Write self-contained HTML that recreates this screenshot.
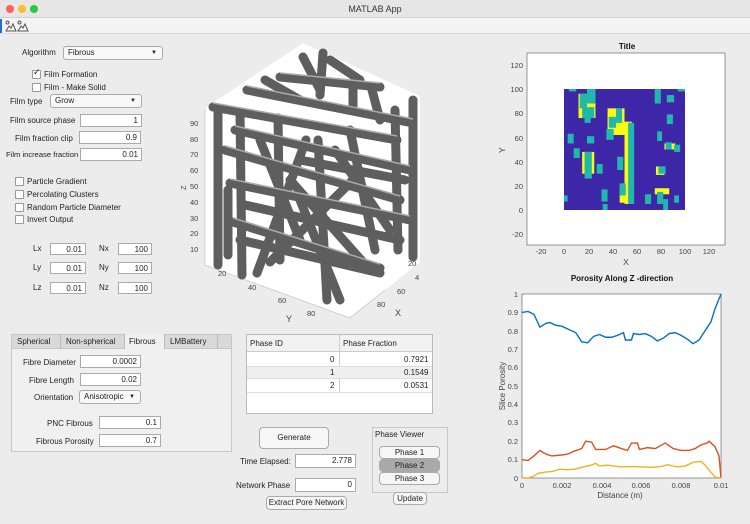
<!DOCTYPE html>
<html><head><meta charset="utf-8">
<style>
*{box-sizing:border-box;margin:0;padding:0}
body{width:750px;height:524px;overflow:hidden;background:#ececec;font-family:"Liberation Sans",sans-serif;font-size:8px;color:#222;position:relative}
.a{position:absolute;white-space:nowrap}
.in{position:absolute;background:#fff;border:1px solid #aaa;text-align:right;padding-right:3px;font-size:8px;line-height:11px}
.dd{position:absolute;background:#f8f8f8;border:1px solid #aaa;border-radius:3px;padding-left:4px;font-size:8px}
.dd:after{content:"▼";position:absolute;right:5px;font-size:6px}
.cb{position:absolute;width:9px;height:9px;border:1px solid #999;background:#fff;border-radius:1px}
.btn{position:absolute;background:#f6f6f6;border:1px solid #aaa;border-radius:4px;text-align:center;font-size:8px}
</style></head><body>
<div class="a" style="left:0;top:0;width:750px;height:18px;background:#e6e6e6;border-bottom:1px solid #d0d0d0"></div>
<div class="a" style="left:6px;top:5px;width:8px;height:8px;border-radius:50%;background:#fe5f57"></div>
<div class="a" style="left:18px;top:5px;width:8px;height:8px;border-radius:50%;background:#febc2e"></div>
<div class="a" style="left:30px;top:5px;width:8px;height:8px;border-radius:50%;background:#28c840"></div>
<div class="a" style="left:0;top:4px;width:750px;text-align:center;font-size:9px;color:#333">MATLAB App</div>
<div class="a" style="left:0;top:18px;width:750px;height:16px;background:#f4f4f4;border-bottom:1px solid #d8d8d8"></div>
<div class="a" style="left:0;top:19px;width:2px;height:14px;background:#1e6fd0"></div>
<svg class="a" style="left:5px;top:20px" width="30" height="12"><g fill="none" stroke="#555" stroke-width="1"><circle cx="2.5" cy="2.5" r="1.5"/><path d="M1 11 L4 6 L6 8 L8 4 L11 11 Z"/><circle cx="14.5" cy="2.5" r="1.5"/><path d="M13 11 L16 6 L18 8 L20 4 L23 11 Z"/></g></svg>

<div class="a" style="left:22px;top:48px">Algorithm</div>
<div class="dd" style="left:63px;top:46px;width:100px;height:14px;line-height:12px">Fibrous</div>
<div class="cb" style="left:32px;top:70px"></div><div class="a" style="left:33px;top:67px;font-size:9px">✓</div>
<div class="a" style="left:44px;top:70px">Film Formation</div>
<div class="cb" style="left:32px;top:83px"></div><div class="a" style="left:44px;top:83px">Film - Make Solid</div>
<div class="a" style="left:10px;top:97px">Film type</div>
<div class="dd" style="left:50px;top:94px;width:92px;height:14px;line-height:12px">Grow</div>
<div class="a" style="left:10px;top:116px">Film source phase</div>
<div class="in" style="left:80px;top:114px;width:62px;height:13px">1</div>
<div class="a" style="left:15px;top:134px">Film fraction clip</div>
<div class="in" style="left:79px;top:131px;width:62px;height:13px">0.9</div>
<div class="a" style="left:6px;top:150px;font-size:7.6px">Film increase fraction</div>
<div class="in" style="left:80px;top:148px;width:62px;height:13px">0.01</div>

<div class="cb" style="left:15px;top:177px"></div><div class="a" style="left:27px;top:177px">Particle Gradient</div>
<div class="cb" style="left:15px;top:190px"></div><div class="a" style="left:27px;top:190px">Percolating Clusters</div>
<div class="cb" style="left:15px;top:203px"></div><div class="a" style="left:27px;top:203px">Random Particle Diameter</div>
<div class="cb" style="left:15px;top:215px"></div><div class="a" style="left:27px;top:215px">Invert Output</div>

<div class="a" style="left:33px;top:244px">Lx</div><div class="in" style="left:50px;top:243px;width:36px;height:12px">0.01</div>
<div class="a" style="left:99px;top:244px">Nx</div><div class="in" style="left:118px;top:243px;width:34px;height:12px">100</div>
<div class="a" style="left:33px;top:263px">Ly</div><div class="in" style="left:50px;top:262px;width:36px;height:12px">0.01</div>
<div class="a" style="left:99px;top:263px">Ny</div><div class="in" style="left:118px;top:262px;width:34px;height:12px">100</div>
<div class="a" style="left:33px;top:283px">Lz</div><div class="in" style="left:50px;top:282px;width:36px;height:12px">0.01</div>
<div class="a" style="left:99px;top:283px">Nz</div><div class="in" style="left:118px;top:282px;width:34px;height:12px">100</div>

<div class="a" style="left:11px;top:334px;width:221px;height:118px;border:1px solid #c8c8c8;background:#f0f0f0"></div>
<div class="a" style="left:11px;top:334px;width:221px;height:15px;background:#d9d9d9;border:1px solid #c8c8c8"></div>
<div class="a" style="left:17px;top:337px">Spherical</div>
<div class="a" style="left:60px;top:334px;width:1px;height:15px;background:#bbb"></div>
<div class="a" style="left:66px;top:337px">Non-spherical</div>
<div class="a" style="left:124px;top:334px;width:41px;height:15px;background:#f0f0f0;border-left:1px solid #bbb;border-right:1px solid #bbb"></div>
<div class="a" style="left:129px;top:337px">Fibrous</div>
<div class="a" style="left:170px;top:337px">LMBattery</div>
<div class="a" style="left:217px;top:334px;width:1px;height:15px;background:#bbb"></div>
<div class="a" style="left:23px;top:358px">Fibre Diameter</div><div class="in" style="left:80px;top:355px;width:61px;height:13px">0.0002</div>
<div class="a" style="left:29px;top:376px">Fibre Length</div><div class="in" style="left:80px;top:373px;width:61px;height:13px">0.02</div>
<div class="a" style="left:34px;top:393px">Orientation</div>
<div class="dd" style="left:79px;top:390px;width:62px;height:14px;line-height:12px">Anisotropic</div>
<div class="a" style="left:47px;top:419px">PNC Fibrous</div><div class="in" style="left:99px;top:416px;width:62px;height:13px">0.1</div>
<div class="a" style="left:36px;top:437px">Fibrous Porosity</div><div class="in" style="left:99px;top:434px;width:62px;height:13px">0.7</div>

<div class="a" style="left:246px;top:334px;width:187px;height:80px;background:#fff;border:1px solid #bbb"></div>
<div class="a" style="left:247px;top:335px;width:185px;height:17px;background:#f2f2f2;border-bottom:1px solid #ccc"></div>
<div class="a" style="left:339px;top:335px;width:1px;height:57px;background:#ccc"></div>
<div class="a" style="left:250px;top:339px">Phase ID</div><div class="a" style="left:343px;top:339px">Phase Fraction</div>
<div class="a" style="left:247px;top:366px;width:185px;height:13px;background:#efefef;border-top:1px solid #ddd;border-bottom:1px solid #ddd"></div>
<div class="a" style="left:247px;top:392px;width:185px;height:1px;background:#ddd"></div>
<div class="a" style="left:330px;top:355px">0</div><div class="a" style="left:404px;top:355px">0.7921</div>
<div class="a" style="left:330px;top:368px">1</div><div class="a" style="left:404px;top:368px">0.1549</div>
<div class="a" style="left:330px;top:381px">2</div><div class="a" style="left:404px;top:381px">0.0531</div>

<div class="btn" style="left:259px;top:427px;width:70px;height:22px;line-height:20px">Generate</div>
<div class="a" style="left:240px;top:457px">Time Elapsed:</div><div class="in" style="left:295px;top:454px;width:61px;height:14px;line-height:12px">2.778</div>
<div class="a" style="left:236px;top:481px">Network Phase</div><div class="in" style="left:295px;top:478px;width:61px;height:14px;line-height:12px">0</div>
<div class="btn" style="left:266px;top:496px;width:81px;height:14px;line-height:12px">Extract Pore Network</div>

<div class="a" style="left:372px;top:427px;width:76px;height:66px;border:1px solid #c8c8c8;background:#ececec"></div>
<div class="a" style="left:375px;top:430px">Phase Viewer</div>
<div class="btn" style="left:379px;top:446px;width:61px;height:13px;line-height:11px">Phase 1</div>
<div class="btn" style="left:379px;top:459px;width:61px;height:13px;line-height:11px;background:#a9a9a9">Phase 2</div>
<div class="btn" style="left:379px;top:472px;width:61px;height:13px;line-height:11px">Phase 3</div>
<div class="btn" style="left:393px;top:492px;width:34px;height:13px;line-height:11px">Update</div>

<svg class="a" style="left:0;top:0" width="750" height="524">
<polygon points="303,43 420,96 420,262 350,318 205,265 205,108" fill="#fff"/>
<g stroke="#bbb" stroke-width="0.6" fill="none"><path d="M205,265 L350,318 L385,290"/><path d="M205,108 L205,265"/></g>
<g font-size="7.5" fill="#444" font-family="Liberation Sans">
<text x="190" y="126">90</text><text x="190" y="142">80</text><text x="190" y="157">70</text><text x="190" y="173">60</text><text x="190" y="189">50</text><text x="190" y="205">40</text><text x="190" y="221">30</text><text x="190" y="236">20</text><text x="190" y="252">10</text>
<text x="180" y="190" transform="rotate(-90 183 187)">Z</text>
<text x="218" y="276">20</text><text x="248" y="290">40</text><text x="278" y="303">60</text><text x="307" y="316">80</text><text x="286" y="322" font-size="9">Y</text>
<text x="408" y="266">20</text><text x="415" y="280">4</text><text x="397" y="294">60</text><text x="377" y="307">80</text><text x="395" y="316" font-size="9">X</text>
</g>
<g stroke="#5e5e5e" stroke-width="9" stroke-linecap="round" fill="none">
<path d="M247,90 L413,123"/><path d="M280,77 L380,87"/><path d="M303,57 L320,90"/><path d="M323,53 L320,95"/><path d="M353,85 L353,110"/><path d="M372,90 L380,120"/><path d="M330,60 L360,80"/><path d="M265,80 L300,100"/>
<path d="M213,107 L397,140"/><path d="M230,183 L410,220"/><path d="M233,222 L380,268"/><path d="M240,240 L380,273"/><path d="M225,150 L400,200"/><path d="M235,130 L410,170"/><path d="M245,205 L400,240"/><path d="M300,160 L405,180"/>
<path d="M218,108 L218,265"/><path d="M240,112 L242,275"/><path d="M278,118 L280,260"/><path d="M413,100 L413,257"/><path d="M395,110 L398,250"/><path d="M228,190 L228,255"/>
<path d="M306,140 L257,273"/><path d="M318,140 L327,300"/><path d="M270,262 L360,173"/><path d="M335,150 L390,230"/><path d="M300,200 L340,300"/><path d="M350,130 L375,250"/><path d="M290,180 L370,270"/><path d="M260,140 L300,240"/>
</g>
<g stroke="#aaa" stroke-width="1.5" fill="none">
<path d="M247,86 L413,119"/><path d="M213,103 L397,136"/><path d="M230,179 L410,216"/><path d="M233,218 L380,264"/><path d="M225,146 L400,196"/><path d="M280,73 L380,83"/><path d="M235,126 L410,166"/>
</g>

<rect x="527" y="53" width="198" height="192" fill="#fff" stroke="#333" stroke-width="0.5"/>
<g transform="translate(564,210) scale(1.21,-1.21)">
<rect x="0" y="0" width="100" height="100" fill="#3e26a8"/>
<g fill="#f9fb0e">
<rect x="12" y="76" width="14" height="20"/><rect x="36" y="62" width="14" height="22"/><rect x="50" y="5" width="6" height="68"/><rect x="15" y="30" width="10" height="18"/><rect x="46" y="6" width="11" height="14"/><rect x="75" y="13" width="12" height="5"/><rect x="76" y="29" width="7" height="7"/><rect x="83" y="50" width="9" height="5"/>
</g>
<g fill="#21b8ab">
<rect x="13" y="84" width="6" height="12"/><rect x="19" y="88" width="7" height="12"/><rect x="15" y="76" width="10" height="9"/><rect x="17" y="72" width="5" height="8"/><rect x="37" y="68" width="6" height="9"/><rect x="43" y="72" width="5" height="12"/><rect x="35" y="58" width="6" height="9"/><rect x="53" y="5" width="5" height="67"/><rect x="3" y="55" width="5" height="8"/><rect x="19" y="55" width="6" height="6"/><rect x="8" y="43" width="5" height="8"/><rect x="17" y="26" width="6" height="22"/><rect x="27" y="30" width="5" height="8"/><rect x="44" y="33" width="5" height="11"/><rect x="46" y="12" width="5" height="10"/><rect x="31" y="7" width="5" height="10"/><rect x="32" y="0" width="4" height="5"/><rect x="0" y="7" width="3" height="5"/><rect x="67" y="5" width="5" height="8"/><rect x="77" y="5" width="5" height="10"/><rect x="82" y="0" width="4" height="9"/><rect x="75" y="88" width="5" height="12"/><rect x="85" y="89" width="6" height="6"/><rect x="77" y="57" width="4" height="8"/><rect x="84" y="50" width="5" height="6"/><rect x="91" y="48" width="5" height="6"/><rect x="78" y="30" width="6" height="6"/><rect x="91" y="6" width="4" height="6"/><rect x="85" y="71" width="5" height="8"/><rect x="4" y="98" width="6" height="2"/><rect x="94" y="98" width="6" height="2"/><rect x="20" y="93" width="6" height="7"/>
</g></g>
<g font-size="7.5" fill="#444" font-family="Liberation Sans">
<text x="627" y="49" font-weight="bold" fill="#111" font-size="8" text-anchor="middle">Title</text>
<g text-anchor="end"><text x="523" y="68">120</text><text x="523" y="92">100</text><text x="523" y="116">80</text><text x="523" y="141">60</text><text x="523" y="165">40</text><text x="523" y="189">20</text><text x="523" y="213">0</text><text x="523" y="237">-20</text></g>
<g text-anchor="middle"><text x="541" y="254">-20</text><text x="564" y="254">0</text><text x="589" y="254">20</text><text x="613" y="254">40</text><text x="637" y="254">60</text><text x="661" y="254">80</text><text x="685" y="254">100</text><text x="709" y="254">120</text><text x="626" y="265" font-size="8.5">X</text></g>
<text x="500" y="152" font-size="8.5" transform="rotate(-90 503 150)">Y</text>
</g>

<rect x="522" y="294" width="199" height="184" fill="#fff" stroke="#333" stroke-width="0.5"/>
<g fill="none" stroke-width="1.4" transform="translate(522,478) scale(1.99,-1.84)">
<polyline vector-effect="non-scaling-stroke" stroke="#0072bd" points="0,90 3,90.5 6,89 9,82 12,84 14,84.5 17,83 20,82.5 23,81 27,79 30,74 33,73.5 36,77 39,78 42,76.5 45,76.5 48,77.5 51,79 52,75 55,75 56,78.5 59,78 62,78.5 65,77 68,74.5 71,76 74,78.5 77,79 80,77.5 83,75.5 86,73 89,75 92,80 95,85 97,92 100,100"/>
<polyline vector-effect="non-scaling-stroke" stroke="#d95319" points="0,10 3,9.5 6,12 9,15 12,13 15,12 20,12.5 23,13 26,14.5 30,16 32,20 35,19.5 37,15.5 42,15.5 46,17.5 50,16 53,15 55,19 58,19 59,15.5 63,16.5 67,16 72,19 76,16 80,15 84,15 87,16 90,18 93,19 94,20 97,17 99,12 100,0"/>
<polyline vector-effect="non-scaling-stroke" stroke="#edb120" points="0,0 3,0 6,1 8,2.5 12,3.3 15,3.5 19,4.8 22,4.5 26,4.7 30,5.8 35,7 37,8 39,6.5 43,7 46,6.5 50,6 55,6.2 60,6 65,5.8 70,6.2 73,7.2 78,6 82,6.5 86,8.5 90,9 92,7 95,3 97,0.5 100,0"/>
</g>
<g font-size="7.5" fill="#444" font-family="Liberation Sans">
<text x="622" y="281" font-weight="bold" fill="#111" font-size="8" text-anchor="middle">Porosity Along Z -direction</text>
<g text-anchor="end"><text x="518" y="297">1</text><text x="518" y="315">0.9</text><text x="518" y="334">0.8</text><text x="518" y="352">0.7</text><text x="518" y="370">0.6</text><text x="518" y="389">0.5</text><text x="518" y="407">0.4</text><text x="518" y="425">0.3</text><text x="518" y="444">0.2</text><text x="518" y="462">0.1</text><text x="518" y="481">0</text></g>
<g text-anchor="middle"><text x="522" y="488">0</text><text x="562" y="488">0.002</text><text x="602" y="488">0.004</text><text x="641" y="488">0.006</text><text x="681" y="488">0.008</text><text x="721" y="488">0.01</text><text x="620" y="498" font-size="8">Distance (m)</text></g>
<text x="505" y="386" font-size="8" text-anchor="middle" transform="rotate(-90 505 386)">Slice Porosity</text>
</g>
</svg>
</body></html>
